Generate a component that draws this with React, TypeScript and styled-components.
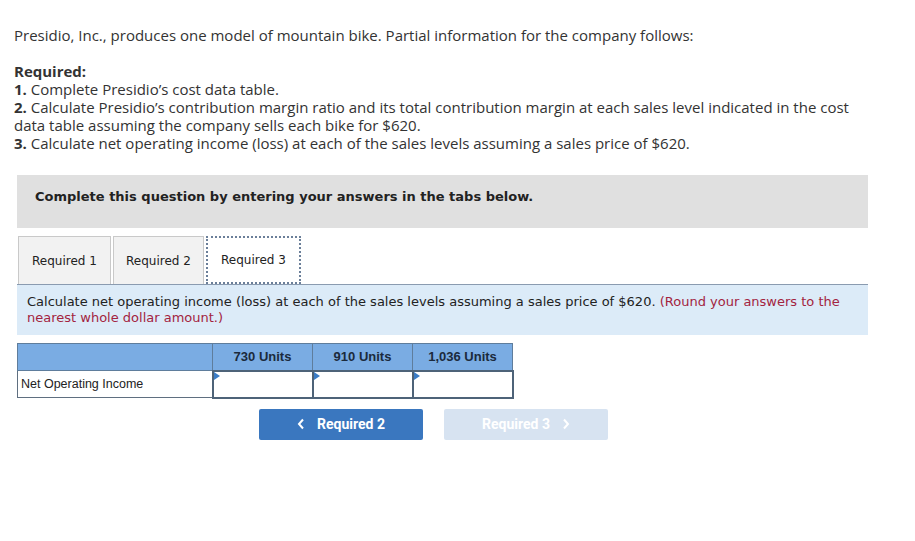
import React from 'react';
import styled, { createGlobalStyle } from 'styled-components';

const GlobalStyle = createGlobalStyle`
  html, body {
    margin: 0;
    padding: 0;
    background: #ffffff;
  }
  body {
    font-family: "Open Sans", "Liberation Sans", sans-serif;
    color: #333333;
  }
`;

const Page = styled.div`
  width: 915px;
  padding: 26px 0 0 0;
  box-sizing: border-box;
`;

const Intro = styled.div`
  padding-left: 14px;
  font-family: "Open Sans", "Liberation Sans", sans-serif;
  font-size: 15px;
  line-height: 18px;
  color: #333333;
`;

const Para = styled.p<{ $gap?: boolean }>`
  margin: ${(p) => (p.$gap ? '18px 0 0 0' : '0')};
`;

const Strong = styled.span`
  font-weight: 700;
`;

const Question = styled.div`
  margin: 0 0 0 17px;
  width: 851px;
`;

const Banner = styled.div`
  margin-top: 23px;
  height: 53px;
  box-sizing: border-box;
  padding: 14px 18px 0;
  background: #e0e0e0;
  font-family: "DejaVu Sans", Verdana, sans-serif;
  font-size: 13px;
  font-weight: 700;
  line-height: 16px;
  color: #222222;
`;

const Tabs = styled.div`
  display: flex;
  margin-top: 8px;
  padding-left: 1px;
  gap: 2px;
`;

const Tab = styled.div<{ $active?: boolean; $w: number }>`
  width: ${(p) => p.$w}px;
  height: 48px;
  box-sizing: border-box;
  display: flex;
  align-items: center;
  justify-content: center;
  font-family: "DejaVu Sans", Verdana, sans-serif;
  font-size: 12px;
  color: #222222;
  background: ${(p) => (p.$active ? '#ffffff' : '#f2f2f2')};
  border: ${(p) => (p.$active ? '2px dotted #6b7f99' : '1px solid #c9c9c9')};
  border-bottom: ${(p) => (p.$active ? '2px dotted #6b7f99' : 'none')};
`;

const Panel = styled.div`
  background: #dcebf8;
  border-top: 1px solid #8a9bb0;
  padding: 9px 10px 9px 10px;
  font-family: "DejaVu Sans", Verdana, sans-serif;
  font-size: 13px;
  line-height: 16px;
  color: #222222;
`;

const PanelLine = styled.div``;

const Note = styled.span`
  color: #a3243f;
`;

const Table = styled.table`
  margin-top: 8px;
  border-collapse: collapse;
  font-family: "Liberation Sans", Arial, sans-serif;
  font-size: 13px;
`;

const HeadCell = styled.th<{ $w: number }>`
  width: ${(p) => p.$w}px;
  height: 27px;
  padding: 0;
  background: #7aace3;
  border: 1px solid #5f7d9c;
  color: #1b2a3c;
  font-weight: 700;
  text-align: center;
  box-sizing: border-box;
`;

const LabelCell = styled.td`
  height: 26px;
  padding: 0 0 0 3px;
  border: 1px solid #5f6f80;
  color: #222222;
  text-align: left;
  font-size: 12.5px;
`;

const InputCell = styled.td`
  position: relative;
  padding: 0;
  border: 2px solid #4e6378;
  background: #ffffff;
`;

const Marker = styled.span`
  position: absolute;
  left: 0;
  top: 0;
  width: 0;
  height: 0;
  border-top: 4px solid transparent;
  border-bottom: 4px solid transparent;
  border-left: 6px solid #3a7cc6;
`;

const Nav = styled.div`
  display: flex;
  gap: 21px;
  margin-top: 10px;
  padding-left: 242px;
`;

const NavButton = styled.div<{ $disabled?: boolean }>`
  width: 164px;
  height: 31px;
  display: flex;
  align-items: center;
  justify-content: center;
  gap: 12px;
  border-radius: 2px;
  background: ${(p) => (p.$disabled ? '#d7e3f1' : '#3a77bf')};
  color: #ffffff;
  font-family: Roboto, "Liberation Sans", sans-serif;
  font-size: 14px;
  font-weight: 700;
`;

const Chevron = ({ dir }: { dir: 'left' | 'right' }) => (
  <svg width="8" height="12" viewBox="0 0 8 12">
    <path
      d={dir === 'left' ? 'M6 1.5 L2 6 L6 10.5' : 'M2 1.5 L6 6 L2 10.5'}
      fill="none"
      stroke="#ffffff"
      strokeWidth="2"
    />
  </svg>
);

const units = ['730 Units', '910 Units', '1,036 Units'];

export default function App() {
  return (
    <>
      <GlobalStyle />
      <Page>
        <Intro>
          <Para>Presidio, Inc., produces one model of mountain bike. Partial information for the company follows:</Para>
          <Para $gap>
            <Strong>Required:</Strong>
            <br />
            <Strong>1.</Strong> Complete Presidio’s cost data table.
            <br />
            <Strong>2.</Strong> Calculate Presidio’s contribution margin ratio and its total contribution margin at each sales level indicated in the cost
            <br />
            data table assuming the company sells each bike for $620.
            <br />
            <Strong>3.</Strong> Calculate net operating income (loss) at each of the sales levels assuming a sales price of $620.
          </Para>
        </Intro>

        <Question>
          <Banner>Complete this question by entering your answers in the tabs below.</Banner>

          <Tabs>
            <Tab $w={93}>Required 1</Tab>
            <Tab $w={91}>Required 2</Tab>
            <Tab $w={95} $active>
              Required 3
            </Tab>
          </Tabs>

          <Panel>
            <PanelLine>
              Calculate net operating income (loss) at each of the sales levels assuming a sales price of $620.{' '}
              <Note>(Round your answers to the</Note>
            </PanelLine>
            <PanelLine>
              <Note>nearest whole dollar amount.)</Note>
            </PanelLine>
          </Panel>

          <Table>
            <thead>
              <tr>
                <HeadCell $w={195} />
                {units.map((u) => (
                  <HeadCell key={u} $w={100}>
                    {u}
                  </HeadCell>
                ))}
              </tr>
            </thead>
            <tbody>
              <tr>
                <LabelCell>Net Operating Income</LabelCell>
                {units.map((u) => (
                  <InputCell key={u}>
                    <Marker />
                  </InputCell>
                ))}
              </tr>
            </tbody>
          </Table>

          <Nav>
            <NavButton>
              <Chevron dir="left" />
              Required 2
            </NavButton>
            <NavButton $disabled>
              Required 3
              <Chevron dir="right" />
            </NavButton>
          </Nav>
        </Question>
      </Page>
    </>
  );
}
